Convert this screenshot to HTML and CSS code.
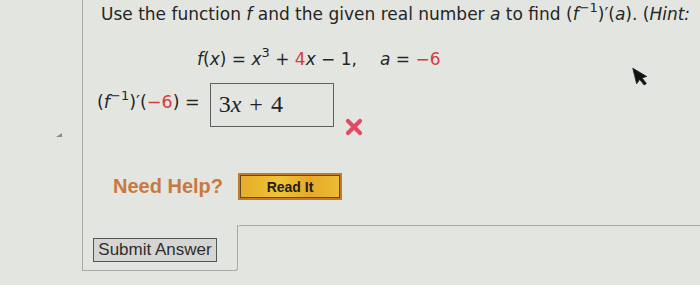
FILE: index.html
```html
<!DOCTYPE html>
<html>
<head>
<meta charset="utf-8">
<link rel="stylesheet" href="styles.css">
</head>
<body>
<div class="page">
  <div class="panel">
    <div class="question">
      <p class="prompt">Use the function <i>f</i> and the given real number <i>a</i> to find (<i>f</i><sup>−1</sup>)′(<i>a</i>). (<i>Hint:</i></p>
      <p class="given"><i>f</i>(<i>x</i>) = <i>x</i><sup>3</sup> + <span class="red">4</span><i>x</i> − 1,<span class="sp"></span><i>a</i> = <span class="red">−6</span></p>
      <div class="answer-row">
        <span class="label">(<i>f</i><sup>−1</sup>)′(<span class="red">−6</span>) =</span>
        <div class="answer-box">3<i>x</i> + 4</div>
        <svg class="wrong" width="18" height="18" viewBox="0 0 18 18"><path d="M3 3 L15 15 M15 3 L3 15" stroke="#e14a62" stroke-width="4.2" stroke-linecap="round"/></svg>
      </div>
      <div class="help-row">
        <span class="need-help">Need Help?</span>
        <span class="read-it">Read It</span>
      </div>
    </div>
    <div class="bottom-row">
      <div class="submit-cell"><button class="submit">Submit Answer</button></div>
      <div class="next-cell"></div>
    </div>
  </div>
  <svg class="cursor" width="16" height="22" viewBox="0 0 16 22"><path d="M1 1 L1 17 L5 13.5 L8 20 L10.5 19 L7.6 12.6 L12.5 12.3 Z" fill="#111" stroke="#222" stroke-width="0.8" transform="rotate(-14 2 2)"/></svg>
  <span class="smudge"></span>
</div>
</body>
</html>
```
FILE: styles.css
```css
html, body {
  margin: 0;
  padding: 0;
}
body {
  background: #e3e5e1;
  width: 700px;
  height: 285px;
  overflow: hidden;
  font-family: "DejaVu Sans", Verdana, sans-serif;
  color: #262626;
}
.page {
  position: relative;
  height: 285px;
}
.panel {
  margin-left: 82px;
  display: flex;
  flex-direction: column;
}
.question {
  border-left: 1px solid #a9aba7;
  height: 225px;
  padding-left: 18px;
  box-sizing: border-box;
}
p {
  margin: 0;
}
sup {
  font-size: 13px;
  line-height: 0;
  vertical-align: 8px;
}
.prompt {
  font-size: 17px;
  line-height: 28px;
  white-space: nowrap;
}
.given {
  font-size: 17px;
  line-height: 28px;
  margin-top: 17px;
  padding-left: 96px;
  white-space: nowrap;
}
.sp {
  display: inline-block;
  width: 23px;
}
.red {
  color: #d43c3c;
}
.answer-row {
  display: flex;
  align-items: flex-start;
  margin-top: 10px;
  margin-left: -4px;
}
.label {
  font-size: 17.5px;
  line-height: 28px;
  margin-top: 5px;
  white-space: nowrap;
}
.answer-box {
  margin-left: 10px;
  width: 124px;
  height: 44px;
  box-sizing: border-box;
  border: 1px solid #5e605e;
  font-family: "Liberation Serif", "Times New Roman", serif;
  font-size: 24px;
  line-height: 40px;
  padding-left: 8px;
  color: #222;
  word-spacing: 2px;
}
.wrong {
  margin-left: 11px;
  margin-top: 35px;
}
.help-row {
  display: flex;
  align-items: center;
  margin-top: 37px;
  margin-left: 12px;
}
.need-help {
  font-family: "Liberation Sans", Arial, sans-serif;
  font-weight: bold;
  font-size: 20px;
  color: #c9793f;
  line-height: 27px;
}
.read-it {
  margin-left: 15px;
  width: 104px;
  height: 27px;
  box-sizing: border-box;
  border: 2px solid #c47a2c;
  box-shadow: inset 0 0 0 1px #5e4a22;
  background: linear-gradient(90deg, #e6ac2a, #efc436 40%, #e5a928 70%, #ecbd34);
  font-family: "Liberation Sans", Arial, sans-serif;
  font-weight: bold;
  font-size: 14px;
  color: #1e1e1e;
  display: flex;
  align-items: center;
  justify-content: center;
}
.bottom-row {
  display: flex;
  height: 46px;
}
.submit-cell {
  width: 156px;
  box-sizing: border-box;
  border-left: 1px solid #a9aba7;
  border-bottom: 1px solid #a9aba7;
  border-right: 1px solid #a9aba7;
  border-bottom-right-radius: 3px;
  padding-left: 10px;
  padding-top: 13px;
}
.next-cell {
  flex: 1;
  border-top: 1px solid #a9aba7;
  border-top-left-radius: 2px;
}
.submit {
  width: 124px;
  height: 24px;
  border: 1px solid #555;
  background: #d5d6d3;
  font-family: "Liberation Sans", Arial, sans-serif;
  font-size: 17px;
  color: #2e2e2e;
  padding: 0;
  line-height: 22px;
}
.cursor {
  position: absolute;
  left: 632px;
  top: 67px;
}
.smudge {
  position: absolute;
  left: 56px;
  top: 133px;
  width: 0;
  height: 0;
  border-left: 6px solid transparent;
  border-bottom: 4px solid #8a8c88;
}
```
